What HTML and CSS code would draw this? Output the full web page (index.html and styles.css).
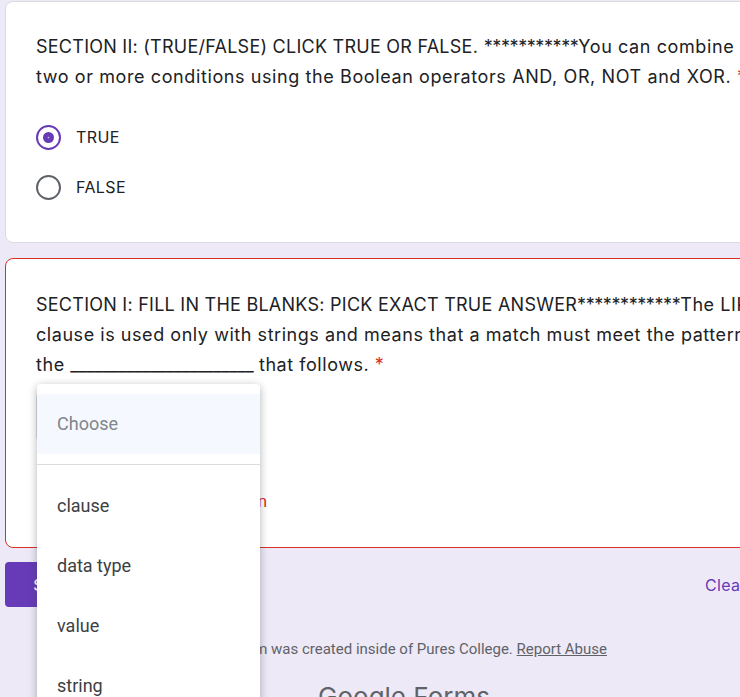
FILE: index.html
```html
<!DOCTYPE html>
<html lang="en">
<head>
    <meta charset="UTF-8">
    <meta name="viewport" content="width=device-width, initial-scale=1.0">
    <title>Quiz</title>
    <link rel="stylesheet" href="styles.css">
</head>
<body>
    <div class="form">
        <div class="card">
            <div class="question"><span class="caps">SECTION II: (TRUE/FALSE) CLICK TRUE OR FALSE.</span> <span class="symbols">***********</span>You can combine two or more conditions using the Boolean operators AND, OR, NOT and XOR. <span class="req">*</span></div>
            <div class="options">
                <div class="option"><span class="radio checked"></span>TRUE</div>
                <div class="option"><span class="radio"></span>FALSE</div>
            </div>
        </div>

        <div class="card card-error">
            <div class="question"><span class="caps">SECTION I: FILL IN THE BLANKS: PICK EXACT TRUE ANSWER</span><span class="symbols">************</span>The LIKE clause is used only with strings and means that a match must meet the pattern in the <span class="blank">_______________________</span> that follows. <span class="req">*</span></div>
            <div class="select-wrap">
                <div class="select">Choose</div>
                <div class="dropdown">
                    <div class="dropdown-item selected placeholder">Choose</div>
                    <div class="divider"></div>
                    <div class="dropdown-item">clause</div>
                    <div class="dropdown-item">data type</div>
                    <div class="dropdown-item">value</div>
                    <div class="dropdown-item">string</div>
                </div>
            </div>
            <div class="error">This is a required question</div>
        </div>

        <div class="actions">
            <button class="btn-submit">Submit</button>
            <button class="btn-clear">Clear form</button>
        </div>

        <div class="footer">This form was created inside of Pures College. <a href="#">Report Abuse</a></div>
        <div class="brand"><span class="brand-google">Google</span> Forms</div>
    </div>
</body>
</html>
```

FILE: styles.css
```css
* { margin: 0; padding: 0; box-sizing: border-box; }
html, body { height: 100%; overflow: hidden; }
body {
    font-family: Inter, sans-serif;
    background: #eee9f7;
    color: #202124;
}
.form {
    width: 785px;
    margin-left: 5px;
    padding-top: 1px;
}
.card {
    background: white;
    border: 1px solid #dadce0;
    border-radius: 8px;
    padding: 30px 20px 30px 30px;
    height: 242px;
    margin-bottom: 15px;
}
.card-error {
    border-color: #d93025;
    height: 290px;
    padding-top: 31px;
}
.question {
    max-width: 732px;
    font-size: 18px;
    letter-spacing: 0.6px;
    line-height: 30px;
}
.card-error .question { letter-spacing: 0.55px; }
.question .caps { letter-spacing: 0.25px; }
.question .symbols { letter-spacing: -0.42px; }
.question .blank { letter-spacing: -0.25px; }
.req { color: #d93025; }
.options { margin-top: 20px; }
.option {
    display: flex;
    align-items: center;
    gap: 15px;
    height: 50px;
    font-size: 16px;
    letter-spacing: 0.4px;
}
.radio {
    position: relative;
    width: 25px;
    height: 25px;
    border: 2px solid #5f6368;
    border-radius: 50%;
}
.radio.checked { border-color: #673ab7; }
.radio.checked::after {
    content: "";
    position: absolute;
    left: 5px;
    top: 5px;
    width: 11px;
    height: 11px;
    border-radius: 50%;
    background: radial-gradient(circle, #b9a3e0 0, #673ab7 1.5px);
}
.select-wrap {
    position: relative;
    height: 48px;
    margin-top: 13px;
}
.select {
    width: 200px;
    height: 48px;
    border: 1px solid #dadce0;
    border-radius: 4px;
    font-family: Roboto, sans-serif;
    line-height: 46px;
    padding-left: 16px;
}
.dropdown {
    position: absolute;
    left: 1px;
    top: -9px;
    width: 223px;
    height: 420px;
    padding-top: 10px;
    background: white;
    border-radius: 4px;
    box-shadow: 0 2px 8px rgba(60, 64, 67, 0.4);
    font-family: Roboto, sans-serif;
    z-index: 2;
}
.dropdown-item {
    height: 60px;
    line-height: 60px;
    padding-left: 20px;
    font-size: 18px;
    color: #3c4043;
}
.dropdown-item.selected { background: #f5f8fe; }
.dropdown-item.placeholder { color: #80868b; }
.divider {
    height: 1px;
    margin: 10px 0 11px;
    background: #dadce0;
}
.error {
    margin-top: 50px;
    padding-left: 32px;
    font-family: Roboto, sans-serif;
    font-size: 17px;
    color: #d93025;
}
.actions {
    display: flex;
    justify-content: space-between;
    align-items: center;
    margin-top: -1px;
    height: 45px;
}
.btn-submit {
    width: 110px;
    height: 45px;
    border: none;
    border-radius: 4px;
    background: #673ab7;
    color: white;
    font: 500 16px Inter, sans-serif;
}
.btn-clear {
    border: none;
    background: none;
    padding-right: 2px;
    color: #673ab7;
    font: 400 16px Inter, sans-serif;
    letter-spacing: 0.3px;
}
.footer {
    margin-top: 33px;
    padding-left: 15px;
    text-align: center;
    font-family: Roboto, sans-serif;
    font-size: 15px;
    color: #5f6368;
}
.footer a { color: #5f6368; }
.brand {
    margin-top: 23px;
    padding-left: 13px;
    text-align: center;
    font-size: 26px;
    color: #5f6368;
}
```
